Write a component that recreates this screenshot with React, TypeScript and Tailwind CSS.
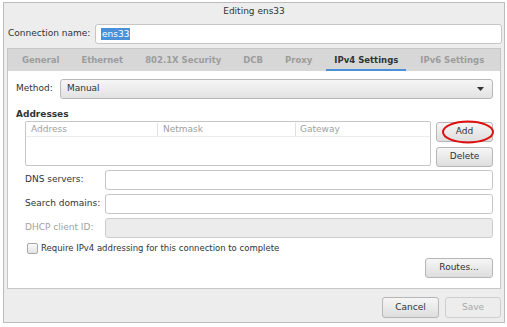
import React from "react";

const font = { fontFamily: '"DejaVu Sans", "Liberation Sans", sans-serif' };

function Btn({ label, className, disabled }: { label: string; className: string; disabled?: boolean }) {
  return (
    <div
      className={
        "flex items-center justify-center rounded-[3px] border text-[9px] " +
        (disabled
          ? "border-[#cfcfcf] bg-[#ededed] text-[#a8a8a8] "
          : "border-[#b6b6b6] bg-gradient-to-b from-[#f6f6f6] to-[#dedede] text-[#2e3436] ") +
        className
      }
    >
      {label}
    </div>
  );
}

function Field({ label, disabled }: { label: string; disabled?: boolean }) {
  return (
    <div className="flex h-[20px] items-center">
      <div className={"w-[80px] text-[9px] " + (disabled ? "text-[#a0a0a0]" : "text-[#2e3436]")}>{label}</div>
      <div
        className={
          "h-[20px] w-[388px] rounded-[3px] border " +
          (disabled ? "border-[#cdcdcd] bg-[#ececec]" : "border-[#c6c6c6] bg-white")
        }
      />
    </div>
  );
}

export default function App() {
  const tabs = ["General", "Ethernet", "802.1X Security", "DCB", "Proxy", "IPv4 Settings", "IPv6 Settings"];
  return (
    <div className="h-[327px] w-[507px] bg-white pl-[3px] pt-[2px]" style={font}>
      <div className="relative flex h-[321px] w-[502px] flex-col border border-[#bcbcbc] bg-[#ededed]">
        <div className="flex h-[17px] items-center justify-center text-[9px] text-[#2e3436]">Editing ens33</div>
        <div className="mt-[4px] flex h-[20px] items-center pl-[4px]">
          <div className="w-[87px] text-[9px] text-[#2e3436]">Connection name:</div>
          <div className="flex h-[20px] w-[407px] items-center rounded-[3px] border border-[#c6c6c6] bg-white pl-[5px]">
            <span className="bg-[#4a90d9] px-[1px] text-[9px] leading-[12px] text-white">ens33</span>
          </div>
        </div>
        <div className="mx-[3px] mt-[4px] flex h-[241px] flex-col border border-[#c6c6c6] bg-white">
          <div className="flex h-[22px] items-stretch gap-[6px] bg-[#d7d7d7] pl-[6px]">
            {tabs.map((t) => (
              <div
                key={t}
                className={
                  "flex items-center whitespace-nowrap px-[8px] text-[8.5px] font-bold " +
                  (t === "IPv4 Settings"
                    ? "border-b-[2px] border-[#4a90d9] pt-[2px] text-[#2e3436]"
                    : "text-[#9c9c9c]")
                }
              >
                {t}
              </div>
            ))}
          </div>
          <div className="flex flex-col pl-[8px] pr-[7px] pt-[8px]">
            <div className="flex h-[20px] items-center">
              <div className="w-[44px] text-[9px] text-[#2e3436]">Method:</div>
              <div className="flex h-[20px] w-[434px] items-center justify-between rounded-[3px] border border-[#b8b8b8] bg-gradient-to-b from-[#f6f6f6] to-[#e2e2e2] pl-[6px] pr-[8px] text-[9px] text-[#2e3436]">
                <span>Manual</span>
                <svg width="7" height="4" viewBox="0 0 7 4">
                  <path d="M0 0 L7 0 L3.5 4 Z" fill="#2e3436" />
                </svg>
              </div>
            </div>
            <div className="mt-[9px] text-[9px] leading-[12px] font-bold text-[#2e3436]">Addresses</div>
            <div className="ml-[9px] mt-[1px] flex gap-[5px]">
              <div className="flex h-[45px] w-[407px] flex-col rounded-[2px] border border-[#c6c6c6] bg-white">
                <div className="flex h-[15px] items-center border-b border-[#ececec] text-[9px] leading-[13px] text-[#a0a0a0]">
                  <div className="w-[132px] border-r border-[#e0e0e0] pl-[5px]">Address</div>
                  <div className="w-[138px] border-r border-[#e0e0e0] pl-[5px]">Netmask</div>
                  <div className="pl-[4px]">Gateway</div>
                </div>
              </div>
              <div className="mt-[1px] flex flex-col gap-[5px]">
                <Btn label="Add" className="h-[20px] w-[57px]" />
                <Btn label="Delete" className="h-[20px] w-[57px]" />
              </div>
            </div>
            <div className="ml-[9px] mt-[3px] flex flex-col gap-[4px]">
              <Field label="DNS servers:" />
              <Field label="Search domains:" />
              <Field label="DHCP client ID:" disabled />
            </div>
            <div className="ml-[11px] mt-[5px] flex h-[11px] items-center gap-[3px]">
              <div className="h-[11px] w-[11px] rounded-[2px] border border-[#a8a8a8] bg-gradient-to-b from-[#fafafa] to-[#e4e4e4]" />
              <span className="text-[8.5px] text-[#2e3436]">Require IPv4 addressing for this connection to complete</span>
            </div>
            <div className="mt-[4px] flex justify-end">
              <Btn label="Routes..." className="h-[20px] w-[68px]" />
            </div>
          </div>
        </div>
        <div className="mt-[8px] flex justify-end gap-[6px] pr-[3px]">
          <Btn label="Cancel" className="h-[21px] w-[57px]" />
          <Btn label="Save" className="h-[21px] w-[56px]" disabled />
        </div>
        <svg className="absolute left-[436px] top-[115px]" width="56" height="28" viewBox="0 0 56 28">
          <ellipse cx="28" cy="14" rx="25" ry="10.5" fill="none" stroke="#e01010" strokeWidth="2" />
        </svg>
      </div>
    </div>
  );
}
